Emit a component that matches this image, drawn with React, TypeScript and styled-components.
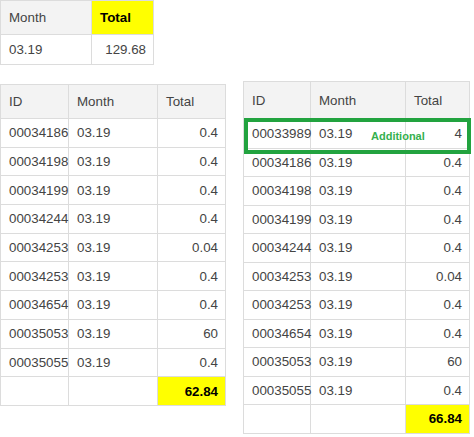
import React from "react";
import styled, { createGlobalStyle } from "styled-components";

const GlobalStyle = createGlobalStyle`
  html, body { margin: 0; padding: 0; background: #ffffff; }
  body { font-family: "Liberation Sans", Arial, sans-serif; }
`;

const Page = styled.div`
  display: flex;
  flex-direction: column;
  gap: 16px;
  width: 474px;
  height: 437px;
  overflow: hidden;
`;

const TablesRow = styled.div`
  display: flex;
  align-items: flex-start;
  gap: 17px;
`;

const Wrap = styled.div<{ $top?: number }>`
  position: relative;
  margin-top: ${(p) => p.$top ?? 0}px;
`;

const Table = styled.table`
  border-collapse: collapse;
  table-layout: fixed;
  font-size: 13.33px;
  color: #444;
`;

const Col = styled.col<{ $w: number }>`
  width: ${(p) => p.$w}px;
`;

const Th = styled.th<{ $h: number; $yellow?: boolean }>`
  height: ${(p) => p.$h}px;
  padding: 0 8px;
  text-align: left;
  font-weight: ${(p) => (p.$yellow ? 700 : 400)};
  color: ${(p) => (p.$yellow ? "#000" : "#444")};
  background: ${(p) => (p.$yellow ? "#ffff00" : "#f3f3f3")};
  border: 1px solid #dcdcdc;
  box-sizing: border-box;
  white-space: nowrap;
`;

const Td = styled.td<{ $h: number; $right?: boolean; $yellow?: boolean }>`
  height: ${(p) => p.$h}px;
  padding: 0 ${(p) => (p.$right ? 7 : 8)}px 0 8px;
  text-align: ${(p) => (p.$right ? "right" : "left")};
  font-weight: ${(p) => (p.$yellow ? 700 : 400)};
  color: ${(p) => (p.$yellow ? "#000" : "#444")};
  background: ${(p) => (p.$yellow ? "#ffff00" : "#fff")};
  border: 1px solid #dcdcdc;
  box-sizing: border-box;
  white-space: nowrap;
  overflow: visible;
`;

const Highlight = styled.div`
  position: absolute;
  left: 1px;
  top: 37px;
  width: 227px;
  height: 36px;
  border: 4px solid #22a33f;
  box-sizing: border-box;
  pointer-events: none;
`;

const Label = styled.span`
  position: absolute;
  left: 123px;
  top: 50%;
  transform: translateY(-50%);
  font-size: 11px;
  font-weight: 700;
  color: #35b04e;
  white-space: nowrap;
`;

type Row = { id: string; month: string; total: string };

const leftRows: Row[] = [
  { id: "00034186", month: "03.19", total: "0.4" },
  { id: "00034198", month: "03.19", total: "0.4" },
  { id: "00034199", month: "03.19", total: "0.4" },
  { id: "00034244", month: "03.19", total: "0.4" },
  { id: "00034253", month: "03.19", total: "0.04" },
  { id: "00034253", month: "03.19", total: "0.4" },
  { id: "00034654", month: "03.19", total: "0.4" },
  { id: "00035053", month: "03.19", total: "60" },
  { id: "00035055", month: "03.19", total: "0.4" },
];

const rightRows: Row[] = [{ id: "00033989", month: "03.19", total: "4" }, ...leftRows];

function DataTable({
  rows,
  widths,
  headH,
  rowH,
  sum,
}: {
  rows: Row[];
  widths: number[];
  headH: number;
  rowH: number;
  sum: string;
}) {
  return (
    <Table style={{ width: widths.reduce((a, b) => a + b, 0) }}>
      <colgroup>
        {widths.map((w, i) => (
          <Col key={i} $w={w} />
        ))}
      </colgroup>
      <thead>
        <tr>
          <Th $h={headH}>ID</Th>
          <Th $h={headH}>Month</Th>
          <Th $h={headH}>Total</Th>
        </tr>
      </thead>
      <tbody>
        {rows.map((r, i) => (
          <tr key={i}>
            <Td $h={rowH}>{r.id}</Td>
            <Td $h={rowH}>{r.month}</Td>
            <Td $h={rowH} $right>
              {r.total}
            </Td>
          </tr>
        ))}
        <tr>
          <Td $h={rowH} />
          <Td $h={rowH} />
          <Td $h={rowH} $right $yellow>
            {sum}
          </Td>
        </tr>
      </tbody>
    </Table>
  );
}

export default function App() {
  return (
    <>
      <GlobalStyle />
      <Page>
        <Table style={{ width: 153 }}>
          <colgroup>
            <Col $w={91} />
            <Col $w={62} />
          </colgroup>
          <thead>
            <tr>
              <Th $h={34}>Month</Th>
              <Th $h={34} $yellow>
                Total
              </Th>
            </tr>
          </thead>
          <tbody>
            <tr>
              <Td $h={30}>03.19</Td>
              <Td $h={30} $right>
                129.68
              </Td>
            </tr>
          </tbody>
        </Table>
        <TablesRow>
          <Wrap $top={3}>
            <DataTable rows={leftRows} widths={[68, 89, 68]} headH={34} rowH={28.7} sum="62.84" />
          </Wrap>
          <Wrap>
            <DataTable rows={rightRows} widths={[67, 95, 64]} headH={38} rowH={28.5} sum="66.84" />
            <Highlight>
              <Label>Additional</Label>
            </Highlight>
          </Wrap>
        </TablesRow>
      </Page>
    </>
  );
}
